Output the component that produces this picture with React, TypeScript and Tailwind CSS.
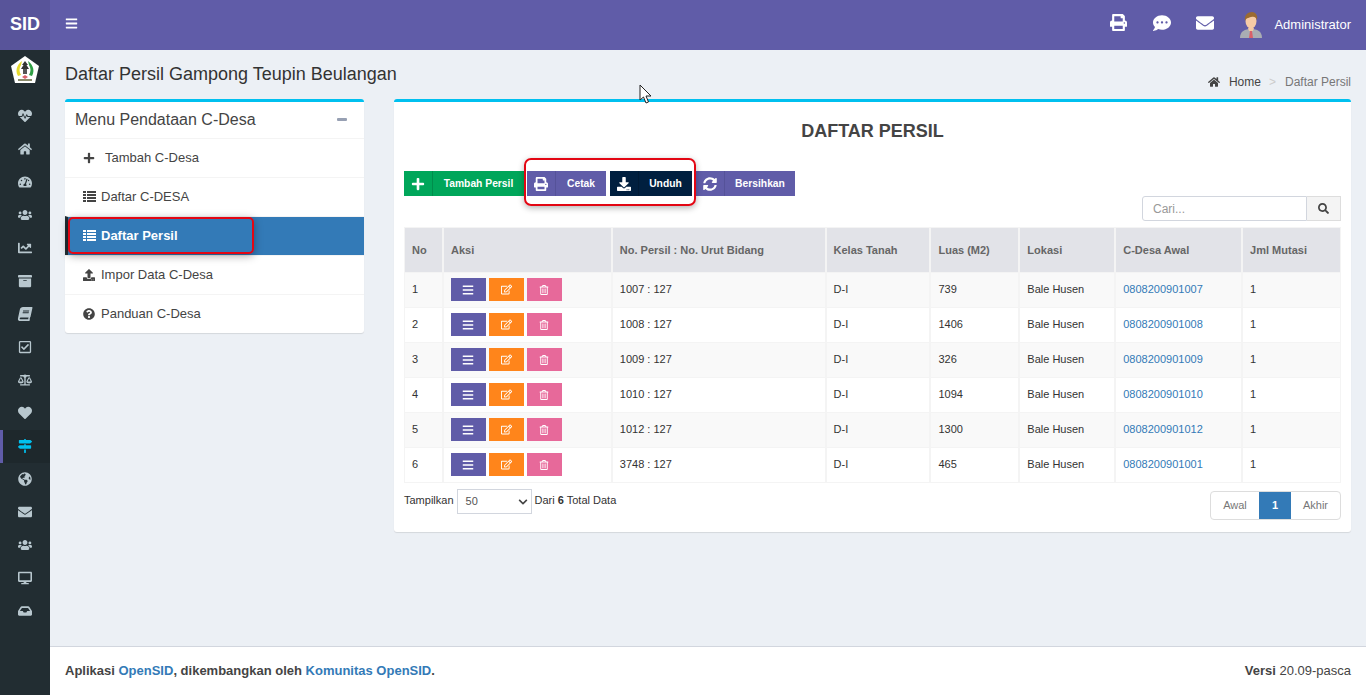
import {
  FaBars, FaPrint, FaCommentDots, FaEnvelope, FaHome, FaHeartbeat, FaTachometerAlt, FaUsers, FaChartLine,
  FaArchive, FaBook, FaRegCheckSquare, FaBalanceScale, FaHeart, FaMapSigns, FaGlobeAmericas, FaDesktop,
  FaInbox, FaPlus, FaUpload, FaQuestionCircle, FaDownload, FaSyncAlt, FaSearch,
  FaRegEdit, FaRegTrashAlt, FaChevronDown,
} from 'react-icons/fa';

const sideIcons = [
  FaHeartbeat, FaHome, FaTachometerAlt, FaUsers, FaChartLine, FaArchive, FaBook, FaRegCheckSquare,
  FaBalanceScale, FaHeart, FaMapSigns, FaGlobeAmericas, FaEnvelope, FaUsers, FaDesktop, FaInbox,
];

const rows = [
  ['1', '1007 : 127', '739', '0808200901007'],
  ['2', '1008 : 127', '1406', '0808200901008'],
  ['3', '1009 : 127', '326', '0808200901009'],
  ['4', '1010 : 127', '1094', '0808200901010'],
  ['5', '1012 : 127', '1300', '0808200901012'],
  ['6', '3748 : 127', '465', '0808200901001'],
];

const headers = [
  ['No', 'w-[39px]'],
  ['Aksi', 'w-[169px]'],
  ['No. Persil : No. Urut Bidang', 'w-[214px]'],
  ['Kelas Tanah', 'w-[105px]'],
  ['Luas (M2)', 'w-[89px]'],
  ['Lokasi', 'w-[96px]'],
  ['C-Desa Awal', 'w-[127px]'],
  ['Jml Mutasi', 'w-[97px]'],
];

function Logo() {
  return (
    <svg width="30" height="30" viewBox="0 0 30 30">
      <path d="M15 1 L29 11 L25 28 L5 28 L1 11 Z" fill="#fff" />
      <path d="M8 21 C4 14 9 8 12 6 L11 10 C9 13 9 17 11 20 Z" fill="#e6d92c" />
      <path d="M22 21 C26 14 21 8 18 6 L19 10 C21 13 21 17 19 20 Z" fill="#2f9e44" />
      <path d="M15 6 L18 10 L16.5 10 L19 14 L11 14 L13.5 10 L12 10 Z" fill="#333" />
      <rect x="13" y="14" width="4" height="5" fill="#555" />
      <path d="M12 22 L15 20 L18 22 L15 24 Z" fill="#d9606a" />
      <rect x="8" y="24" width="14" height="2" fill="#8a8a6a" />
    </svg>
  );
}

function Avatar() {
  return (
    <svg width="24" height="27" viewBox="0 0 24 27">
      <path d="M1 26 C1 19 6 17 12 17 C18 17 23 19 23 26 Z" fill="#a9adb3" />
      <path d="M9 16 L15 16 L14 19 L10 19 Z" fill="#f2c9a5" />
      <path d="M11 19 L13 19 L14 26 L10 26 Z" fill="#d9606a" />
      <ellipse cx="12" cy="9" rx="5.5" ry="7.5" fill="#f6cba6" />
      <path d="M6 9 C5 3 9 0 13 0 C17 0 19 4 18 8 C17 5 15 4 12 5 C9 6 7 6 6 9 Z" fill="#9a6a32" />
    </svg>
  );
}

// four-line list glyph used by the menu rows
function ListGlyph() {
  return (
    <svg width="13" height="11" viewBox="0 0 13 11" fill="currentColor">
      {[0, 3, 6, 9].map((y) => (
        <g key={y}>
          <rect x="0" y={y} width="3" height="2" />
          <rect x="4" y={y} width="9" height="2" />
        </g>
      ))}
    </svg>
  );
}

function ToolButton({ icon, label, bg, divider, width, labelWidth }: { icon: React.ReactNode; label: string; bg: string; divider: string; width: string; labelWidth: string }) {
  return (
    <button className={`flex h-[25px] items-center text-[10.3px] font-bold text-white ${bg} ${width}`}>
      <span className={`flex h-full w-[29px] shrink-0 items-center justify-center border-r text-[14px] ${divider}`}>{icon}</span>
      <span className={`text-center ${labelWidth}`}>{label}</span>
    </button>
  );
}

function MenuRow({ icon, label, active, wide }: { icon: React.ReactNode; label: string; active?: boolean; wide?: boolean }) {
  return (
    <div className={`flex h-[39px] items-center border-t border-[#f4f4f4] pb-px text-[13px] ${active ? 'border-l-[3px] border-l-[#222d32] bg-[#337ab7] pl-[15px] font-bold text-white' : 'pl-[18px] text-[#444]'}`}>
      <span className={`flex text-[12px] ${wide ? 'w-[22px]' : 'w-[18px]'}`}>{icon}</span>
      <span>{label}</span>
    </div>
  );
}

export default function App() {
  return (
    <div className="relative flex h-[695px] flex-col overflow-hidden bg-[#ecf0f5] font-['Liberation_Sans',Arial,sans-serif] text-[#333]">
      {/* Topbar */}
      <header className="flex h-[50px] shrink-0 items-center bg-[#605ca8] text-white">
        <div className="flex h-full w-[50px] items-center justify-center bg-[#58549a] pb-[2px] text-[18px] font-bold">SID</div>
        <FaBars className="mb-[4px] ml-[15px] text-[13px]" />
        <div className="ml-auto flex items-center pr-[15px]">
          <FaPrint className="mr-[26px] mb-[5px] text-[17px]" />
          <FaCommentDots className="mr-[25px] mb-[5px] text-[18px]" />
          <FaEnvelope className="mr-[25px] mb-[5px] text-[18px]" />
          <Avatar />
          <span className="ml-[11px] pb-px text-[13px]">Administrator</span>
        </div>
      </header>

      <div className="flex min-h-0 flex-1">
        {/* Sidebar */}
        <aside className="flex w-[50px] shrink-0 flex-col bg-[#222d32]">
          <div className="flex h-[50px] justify-center pt-[5px]">
            <Logo />
          </div>
          {sideIcons.map((Icon, i) => (
            <div
              key={i}
              className={`flex h-[33px] items-center justify-center pb-[2px] text-[14px] ${i === 10 ? 'border-l-[3px] border-[#605ca8] bg-[#1e282c] pr-[3px] text-[#00c0ef]' : 'text-[#b8c7ce]'}`}
            >
              <Icon className={i === 6 ? '-skew-x-12' : ''} />
            </div>
          ))}
        </aside>

        <div className="flex min-w-0 flex-1 flex-col">
          <main className="min-h-0 flex-1 px-[15px] pt-[14px]">
            <div className="flex h-[35px] items-start justify-between">
              <h1 className="text-[18px] leading-[20px]">Daftar Persil Gampong Teupin Beulangan</h1>
              <div className="flex items-center pt-[9px] text-[12px]">
                <FaHome className="mr-[9px] text-[12px] text-[#444]" />
                <span className="text-[#444]">Home</span>
                <span className="mr-[9px] ml-[8px] text-[#ccc]">&gt;</span>
                <span className="text-[#777]">Daftar Persil</span>
              </div>
            </div>

            <div className="flex items-start gap-[30px]">
              {/* Left menu */}
              <section className="w-[299px] shrink-0 rounded-[3px] border-t-[3px] border-[#00c0ef] bg-white shadow-[0_1px_1px_rgba(0,0,0,0.1)]">
                <div className="flex h-[36px] items-center justify-between pl-[10px] pr-[17px]">
                  <h3 className="text-[16px] text-[#444]">Menu Pendataan C-Desa</h3>
                  <div className="mb-[2px] h-[3px] w-[10px] rounded-[1px] bg-[#97a0b3]" />
                </div>
                <MenuRow icon={<FaPlus />} label="Tambah C-Desa" wide />
                <MenuRow icon={<ListGlyph />} label="Daftar C-DESA" />
                <MenuRow icon={<ListGlyph />} label="Daftar Persil" active />
                <MenuRow icon={<FaUpload />} label="Impor Data C-Desa" />
                <MenuRow icon={<FaQuestionCircle />} label="Panduan C-Desa" />
              </section>

              {/* Main box */}
              <section className="h-[433px] w-[957px] shrink-0 rounded-[3px] border-t-[3px] border-[#00c0ef] bg-white px-[10px] shadow-[0_1px_1px_rgba(0,0,0,0.1)]">
                <h2 className="pt-[19px] text-center text-[18px] leading-[20px] font-bold text-[#444]">DAFTAR PERSIL</h2>

                <div className="mt-[30px] flex">
                  <ToolButton icon={<FaPlus />} label="Tambah Persil" bg="bg-[#00a65a]" divider="border-[#008d4c]" width="w-[120px]" labelWidth="w-[91px]" />
                  <div className="ml-[3px]">
                    <ToolButton icon={<FaPrint />} label="Cetak" bg="bg-[#605ca8]" divider="border-[#555299]" width="w-[79px]" labelWidth="w-[50px]" />
                  </div>
                  <div className="ml-[4px]">
                    <ToolButton icon={<FaDownload />} label="Unduh" bg="bg-[#001f3f]" divider="border-[#001a35]" width="w-[82px]" labelWidth="w-[53px]" />
                  </div>
                  <div className="ml-[4px]">
                    <ToolButton icon={<FaSyncAlt />} label="Bersihkan" bg="bg-[#605ca8]" divider="border-[#555299]" width="w-[99px]" labelWidth="w-[70px]" />
                  </div>
                </div>

                <div className="flex justify-end">
                  <div className="flex h-[25px] w-[199px]">
                    <div className="flex h-full w-[165px] items-center rounded-l-[3px] border border-[#d2d6de] pl-[10px] text-[12px] text-[#999]">Cari...</div>
                    <div className="flex h-full w-[34px] items-center justify-center border border-l-0 border-[#ddd] bg-[#f4f4f4] text-[11px] text-[#444]">
                      <FaSearch />
                    </div>
                  </div>
                </div>

                {/* Table */}
                <div className="mt-[6px] w-[937px] border border-[#f4f4f4] text-[11px]">
                  <div className="flex h-[44px] bg-[#e2e3e8] font-bold text-[#666]">
                    {headers.map(([title, w]) => (
                      <div key={title} className={`flex items-center border-r-2 border-[#f4f4f4] pl-[7px] last:border-r-0 ${w}`}>{title}</div>
                    ))}
                  </div>
                  {rows.map((r, i) => (
                    <div key={r[0]} className={`flex h-[35px] border-t border-[#f4f4f4] ${i % 2 === 0 ? 'bg-[#f9f9f9]' : 'bg-white'}`}>
                      <div className="flex w-[39px] items-center border-r-2 border-[#f4f4f4] pb-px pl-[7px]">{r[0]}</div>
                      <div className="flex w-[169px] items-center gap-[3px] border-r-2 border-[#f4f4f4] pb-px pl-[7px]">
                        <span className="flex h-[23px] w-[35px] items-center justify-center bg-[#605ca8] text-[12px] text-white"><FaBars /></span>
                        <span className="flex h-[23px] w-[35px] items-center justify-center bg-[#ff851b] text-[11px] text-white"><FaRegEdit /></span>
                        <span className="flex h-[23px] w-[35px] items-center justify-center bg-[#e7699a] text-[10px] text-white"><FaRegTrashAlt /></span>
                      </div>
                      <div className="flex w-[214px] items-center border-r-2 border-[#f4f4f4] pb-px pl-[7px]">{r[1]}</div>
                      <div className="flex w-[105px] items-center border-r-2 border-[#f4f4f4] pb-px pl-[7px]">D-I</div>
                      <div className="flex w-[89px] items-center border-r-2 border-[#f4f4f4] pb-px pl-[7px]">{r[2]}</div>
                      <div className="flex w-[96px] items-center border-r-2 border-[#f4f4f4] pb-px pl-[7px]">Bale Husen</div>
                      <div className="flex w-[127px] items-center border-r-2 border-[#f4f4f4] pb-px pl-[7px] text-[#337ab7]">{r[3]}</div>
                      <div className="flex w-[97px] items-center pb-px pl-[7px]">1</div>
                    </div>
                  ))}
                </div>

                {/* Table footer */}
                <div className="mt-[6px] flex items-start justify-between text-[11px]">
                  <div className="flex items-start">
                    <span className="pt-[3px]">Tampilkan</span>
                    <div className="ml-[3px] flex h-[25px] w-[75px] items-center justify-between border border-[#d2d6de] pr-[3px] pl-[8px] text-[#555]">
                      <span>50</span>
                      <FaChevronDown className="text-[10px] text-[#444]" />
                    </div>
                    <span className="ml-[3px] pt-[3px]">Dari <b>6</b> Total Data</span>
                  </div>
                  <div className="mt-[2px] flex h-[29px] w-[131px] overflow-hidden rounded-[4px] border border-[#ddd] text-[#777]">
                    <div className="flex w-[48px] items-center justify-center">Awal</div>
                    <div className="flex w-[32px] items-center justify-center bg-[#337ab7] font-bold text-white">1</div>
                    <div className="flex flex-1 items-center justify-center">Akhir</div>
                  </div>
                </div>
              </section>
            </div>
          </main>

          <footer className="flex h-[49px] shrink-0 items-center justify-between border-t border-[#d2d6de] bg-white px-[15px] text-[13px] font-bold text-[#444]">
            <span>Aplikasi <span className="text-[#337ab7]">OpenSID</span>, dikembangkan oleh <span className="text-[#337ab7]">Komunitas OpenSID</span>.</span>
            <span>Versi <span className="font-normal">20.09-pasca</span></span>
          </footer>
        </div>
      </div>

      {/* Annotation marks and cursor over the shot */}
      <div className="absolute top-[217px] left-[68px] h-[37px] w-[186px] rounded-[5px] border-2 border-[#e30613] shadow-[0_2px_8px_rgba(0,0,0,0.35)]" />
      <div className="absolute top-[158px] left-[524px] h-[48px] w-[172px] rounded-[7px] border-2 border-[#e30613] shadow-[0_2px_6px_rgba(0,0,0,0.3)]" />
      <svg className="absolute top-[84px] left-[639px]" width="14" height="21" viewBox="0 0 14 21">
        <path d="M1 1 L1 16 L4.5 13 L7 19 L9.5 18 L7 12 L12 12 Z" fill="#fff" stroke="#222" strokeWidth="1" />
      </svg>
    </div>
  );
}
